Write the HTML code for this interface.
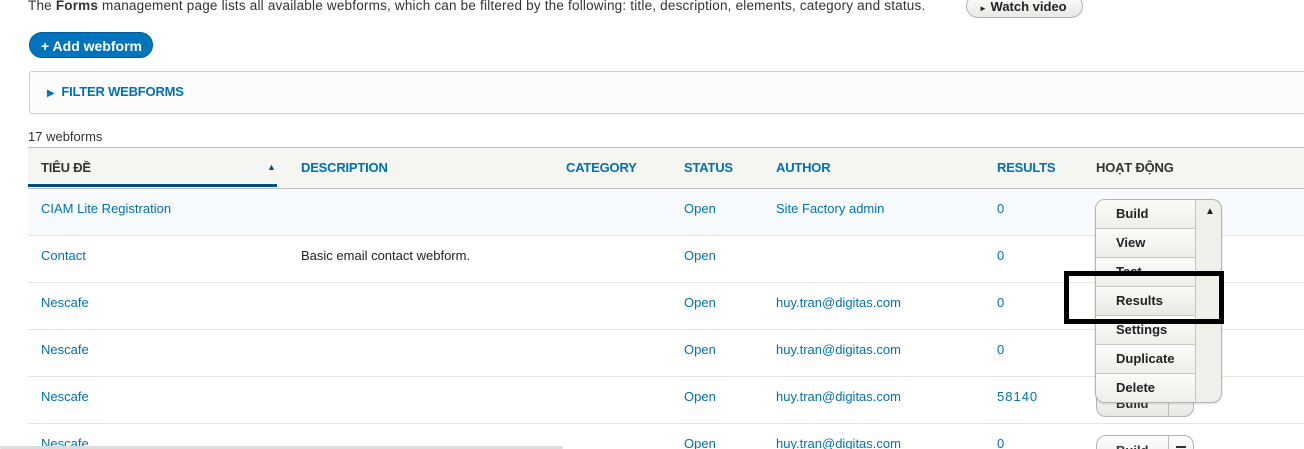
<!DOCTYPE html>
<html style="overflow:hidden;width:1304px;height:449px"><head><meta charset="utf-8">
<style>
*{margin:0;padding:0;box-sizing:border-box}
body{width:1304px;height:449px;overflow:hidden;background:#fff;font-family:"Liberation Sans","DejaVu Sans",sans-serif;font-size:13px;color:#222;position:relative}
.a{position:absolute;white-space:nowrap}
.lnk{color:#0071b8}
.hd{font-weight:bold;color:#0071b8;font-size:13px;letter-spacing:-0.2px}
.row{position:absolute;left:28px;right:0;height:47px;border-bottom:1px solid #e6e4df}
.btn{position:absolute;border:1px solid #b4b4b4;border-radius:12px;background:linear-gradient(#fefefe,#e8e8e3);font-weight:bold;color:#333}
</style></head><body>
<div class="a" style="left:28px;top:-2px;font-size:13.5px;color:#333;letter-spacing:0.2px">The <b>Forms</b> management page lists all available webforms, which can be filtered by the following: title, description, elements, category and status.</div>
<div class="btn" style="left:966px;top:-6px;width:117px;height:24px;font-size:13px;padding:4px 0 0 12px;color:#222"><span style="font-size:8px">&#9658;</span> Watch video</div>
<div class="a" style="left:29px;top:32px;width:124px;height:26px;border-radius:13px;background:#0074bd;color:#fff;font-weight:bold;font-size:14px;padding:5px 0 0 11px;border:1px solid #005e9d">+ Add webform</div>
<div class="a" style="left:29px;top:71px;width:1290px;height:43px;border:1px solid #ccc;border-radius:3px;background:#fcfcfa"></div>
<div class="a hd" style="left:47px;top:84px"><span style="font-size:10px;color:#0071b8">&#9654;</span>&nbsp; FILTER WEBFORMS</div>
<div class="a" style="left:28px;top:129px;color:#333">17 webforms</div>
<div class="a" style="left:28px;top:147px;right:0;height:42px;background:#f5f5f2;border-top:1px solid #bfbfba;border-bottom:1px solid #bfbfba"></div>
<div class="a" style="left:28px;top:184px;width:249px;height:3px;background:#004f80"></div>
<div class="a hd" style="left:41px;top:160px;color:#333">TIÊU ĐỀ</div>
<div class="a" style="left:267px;top:162px;font-size:9px;color:#004f80">&#9650;</div>
<div class="a hd" style="left:301px;top:160px">DESCRIPTION</div>
<div class="a hd" style="left:566px;top:160px">CATEGORY</div>
<div class="a hd" style="left:684px;top:160px">STATUS</div>
<div class="a hd" style="left:776px;top:160px">AUTHOR</div>
<div class="a hd" style="left:997px;top:160px">RESULTS</div>
<div class="a hd" style="left:1096px;top:160px;color:#333">HOẠT ĐỘNG</div>

<div class="row" style="top:189px;background:#f7fbfe"></div>
<div class="row" style="top:236px"></div>
<div class="row" style="top:283px"></div>
<div class="row" style="top:330px"></div>
<div class="row" style="top:377px"></div>

<div class="a lnk" style="left:41px;top:201px">CIAM Lite Registration</div>
<div class="a lnk" style="left:684px;top:201px">Open</div>
<div class="a lnk" style="left:776px;top:201px">Site Factory admin</div>
<div class="a lnk" style="left:997px;top:201px">0</div>

<div class="a lnk" style="left:41px;top:248px">Contact</div>
<div class="a" style="left:301px;top:248px">Basic email contact webform.</div>
<div class="a lnk" style="left:684px;top:248px">Open</div>
<div class="a lnk" style="left:997px;top:248px">0</div>

<div class="a lnk" style="left:41px;top:295px">Nescafe</div>
<div class="a lnk" style="left:684px;top:295px">Open</div>
<div class="a lnk" style="left:776px;top:295px">huy.tran@digitas.com</div>
<div class="a lnk" style="left:997px;top:295px">0</div>

<div class="a lnk" style="left:41px;top:342px">Nescafe</div>
<div class="a lnk" style="left:684px;top:342px">Open</div>
<div class="a lnk" style="left:776px;top:342px">huy.tran@digitas.com</div>
<div class="a lnk" style="left:997px;top:342px">0</div>

<div class="a lnk" style="left:41px;top:389px">Nescafe</div>
<div class="a lnk" style="left:684px;top:389px">Open</div>
<div class="a lnk" style="left:776px;top:389px">huy.tran@digitas.com</div>
<div class="a lnk" style="left:997px;top:389px;letter-spacing:1px">58140</div>

<div class="a lnk" style="left:41px;top:436px">Nescafe</div>
<div class="a lnk" style="left:684px;top:436px">Open</div>
<div class="a lnk" style="left:776px;top:436px">huy.tran@digitas.com</div>
<div class="a lnk" style="left:997px;top:436px">0</div>

<div class="btn" style="left:1096px;top:385px;width:98px;height:32px;border-radius:10px"><div class="a" style="left:19px;top:10px">Build</div><div class="a" style="left:71px;top:0;width:1px;height:30px;background:#bbb"></div></div>
<div class="a" style="left:1090px;top:434px;width:110px;height:15px;overflow:hidden">
<div class="btn" style="left:6px;top:1px;width:98px;height:32px;border-radius:10px"><div class="a" style="left:19px;top:7px">Build</div><div class="a" style="left:71px;top:0;width:1px;height:30px;background:#bbb"></div><div class="a" style="left:79px;top:10px;width:10px;height:2px;background:#333"></div></div>
</div>

<div class="a" style="left:1095px;top:199px;width:127px;height:204px;border:1px solid #b4b4b4;border-radius:10px;background:#f0efea;overflow:hidden;box-shadow:0 1px 2px rgba(0,0,0,.15)">
 <div class="a" style="left:99px;top:0;width:1px;height:204px;background:#c4c4c0"></div>
 <div class="a" style="left:109px;top:6px;font-size:10px;color:#222">&#9650;</div>
 <div style="width:99px">
  <div style="height:29px;border-bottom:1px solid #c6c6c2;padding:6px 0 0 20px;font-weight:bold;background:linear-gradient(#fbfbf9,#efeee9)">Build</div>
  <div style="height:29px;border-bottom:1px solid #c6c6c2;padding:6px 0 0 20px;font-weight:bold;background:linear-gradient(#fbfbf9,#efeee9)">View</div>
  <div style="height:29px;border-bottom:1px solid #c6c6c2;padding:6px 0 0 20px;font-weight:bold;background:linear-gradient(#fbfbf9,#efeee9)">Test</div>
  <div style="height:29px;border-bottom:1px solid #c6c6c2;padding:6px 0 0 20px;font-weight:bold;background:linear-gradient(#fbfbf9,#e9e8e2)">Results</div>
  <div style="height:29px;border-bottom:1px solid #c6c6c2;padding:6px 0 0 20px;font-weight:bold;background:linear-gradient(#fbfbf9,#efeee9)">Settings</div>
  <div style="height:29px;border-bottom:1px solid #c6c6c2;padding:6px 0 0 20px;font-weight:bold;background:linear-gradient(#fbfbf9,#efeee9)">Duplicate</div>
  <div style="height:29px;padding:6px 0 0 20px;font-weight:bold;background:linear-gradient(#fbfbf9,#efeee9)">Delete</div>
 </div>
</div>
<div class="a" style="left:1064px;top:271px;width:160px;height:53px;border:5px solid #000"></div>
<div class="a" style="left:0;top:446px;width:563px;height:3px;background:#dcdcdc;border-radius:2px"></div>
</body></html>
